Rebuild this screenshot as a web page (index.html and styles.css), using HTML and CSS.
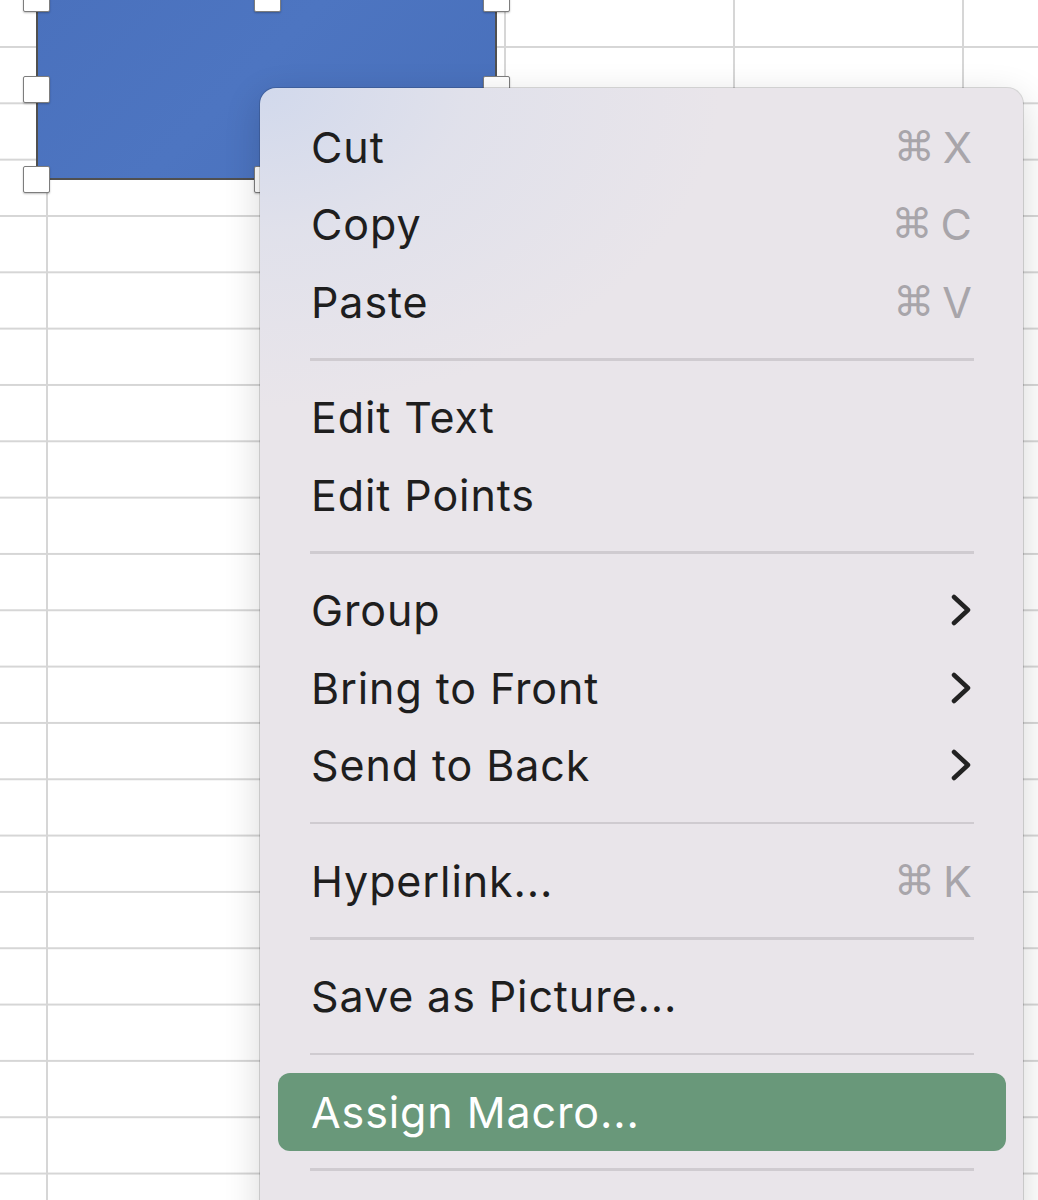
FILE: index.html
```html
<!DOCTYPE html>
<html lang="en">
<head>
<meta charset="utf-8">
<title>Context menu</title>
<link rel="stylesheet" href="styles.css">
</head>
<body>
<div class="sheet">
  <div class="shape">
    <span class="handle h-tl"></span>
    <span class="handle h-tc"></span>
    <span class="handle h-tr"></span>
    <span class="handle h-ml"></span>
    <span class="handle h-mr"></span>
    <span class="handle h-bl"></span>
    <span class="handle h-bc"></span>
    <span class="handle h-br"></span>
  </div>

  <div class="menu">
    <div class="item"><span class="label">Cut</span><span class="key"><span class="cmd">⌘</span>X</span></div>
    <div class="item"><span class="label">Copy</span><span class="key"><span class="cmd">⌘</span>C</span></div>
    <div class="item"><span class="label">Paste</span><span class="key"><span class="cmd">⌘</span>V</span></div>
    <div class="sep"></div>
    <div class="item"><span class="label">Edit Text</span></div>
    <div class="item"><span class="label">Edit Points</span></div>
    <div class="sep"></div>
    <div class="item"><span class="label">Group</span><svg class="chev" viewBox="0 0 20 32" width="20" height="32"><polyline points="3,3 17,16 3,29"/></svg></div>
    <div class="item"><span class="label">Bring to Front</span><svg class="chev" viewBox="0 0 20 32" width="20" height="32"><polyline points="3,3 17,16 3,29"/></svg></div>
    <div class="item"><span class="label">Send to Back</span><svg class="chev" viewBox="0 0 20 32" width="20" height="32"><polyline points="3,3 17,16 3,29"/></svg></div>
    <div class="sep"></div>
    <div class="item"><span class="label">Hyperlink...</span><span class="key"><span class="cmd">⌘</span>K</span></div>
    <div class="sep"></div>
    <div class="item"><span class="label">Save as Picture...</span></div>
    <div class="sep"></div>
    <div class="item active"><span class="label">Assign Macro...</span></div>
    <div class="sep"></div>
  </div>
</div>
</body>
</html>
```

FILE: styles.css
```css
html, body {
  margin: 0;
  padding: 0;
  width: 1038px;
  height: 1200px;
  overflow: hidden;
  background: #ffffff;
}

.sheet {
  position: relative;
  width: 1038px;
  height: 1200px;
  overflow: hidden;
  background-color: #ffffff;
  background-image:
    linear-gradient(to right, #d6d6d6 2px, transparent 2px),
    linear-gradient(to bottom, #d6d6d6 2px, transparent 2px);
  background-size: 229px 100%, 100% 56.33px;
  background-position: 46px 0, 0 46px;
}

/* selected shape */
.shape {
  position: absolute;
  left: 36px;
  top: -2px;
  width: 461px;
  height: 182px;
  background: linear-gradient(135deg, #4a71bd 0%, #4d75c1 45%, #486fba 100%);
  box-shadow: inset 0 0 0 2px #505050;
}

.handle {
  position: absolute;
  width: 27px;
  height: 27px;
  box-sizing: border-box;
  background: #ffffff;
  border: 1.5px solid #7d7d7d;
  border-radius: 2px;
  box-shadow: 0 1px 2px rgba(0, 0, 0, 0.25);
}
.h-tl { left: -13px; top: -13px; }
.h-tc { left: calc(50% - 13px); top: -13px; }
.h-tr { right: -13px; top: -13px; }
.h-ml { left: -13px; top: calc(50% - 13px); }
.h-mr { right: -13px; top: calc(50% - 13px); }
.h-bl { left: -13px; bottom: -13px; }
.h-bc { left: calc(50% - 13px); bottom: -13px; }
.h-br { right: -13px; bottom: -13px; }

/* context menu */
.menu {
  position: absolute;
  left: 260px;
  top: 88px;
  width: 763px;
  box-sizing: border-box;
  padding: 20px 17px 80px 18px;
  border-radius: 16px;
  background:
    radial-gradient(ellipse 460px 320px at 0 0, rgba(208, 216, 236, 0.95) 0%, rgba(214, 220, 236, 0.45) 45%, rgba(233, 229, 234, 0) 100%),
    #e9e5ea;
  box-shadow:
    0 0 0 1px rgba(0, 0, 0, 0.14),
    0 10px 36px rgba(0, 0, 0, 0.16);
  font-family: "Inter", "Liberation Sans", sans-serif;
  font-size: 43px;
  color: #1e1e1e;
}

.item {
  height: 77.5px;
  display: flex;
  align-items: center;
  justify-content: space-between;
  padding: 0 34px 0 33px;
  border-radius: 12px;
}

.item.active {
  background: #69987a;
  color: #ffffff;
}

.label {
  white-space: nowrap;
  letter-spacing: 0.9px;
}

.key {
  display: flex;
  align-items: center;
  color: #a8a5aa;
  white-space: nowrap;
}

.cmd {
  font-family: "DejaVu Sans", sans-serif;
  font-size: 41px;
  margin-right: 8px;
}

.chev {
  display: block;
  margin-right: 1px;
}
.chev polyline {
  fill: none;
  stroke: #222222;
  stroke-width: 4.5;
  stroke-linecap: round;
  stroke-linejoin: round;
}

.sep {
  height: 38px;
  display: flex;
  align-items: center;
  padding: 0 32px;
}
.sep::before {
  content: "";
  display: block;
  flex: 1;
  height: 2.5px;
  background: #cfcbd0;
}
```
